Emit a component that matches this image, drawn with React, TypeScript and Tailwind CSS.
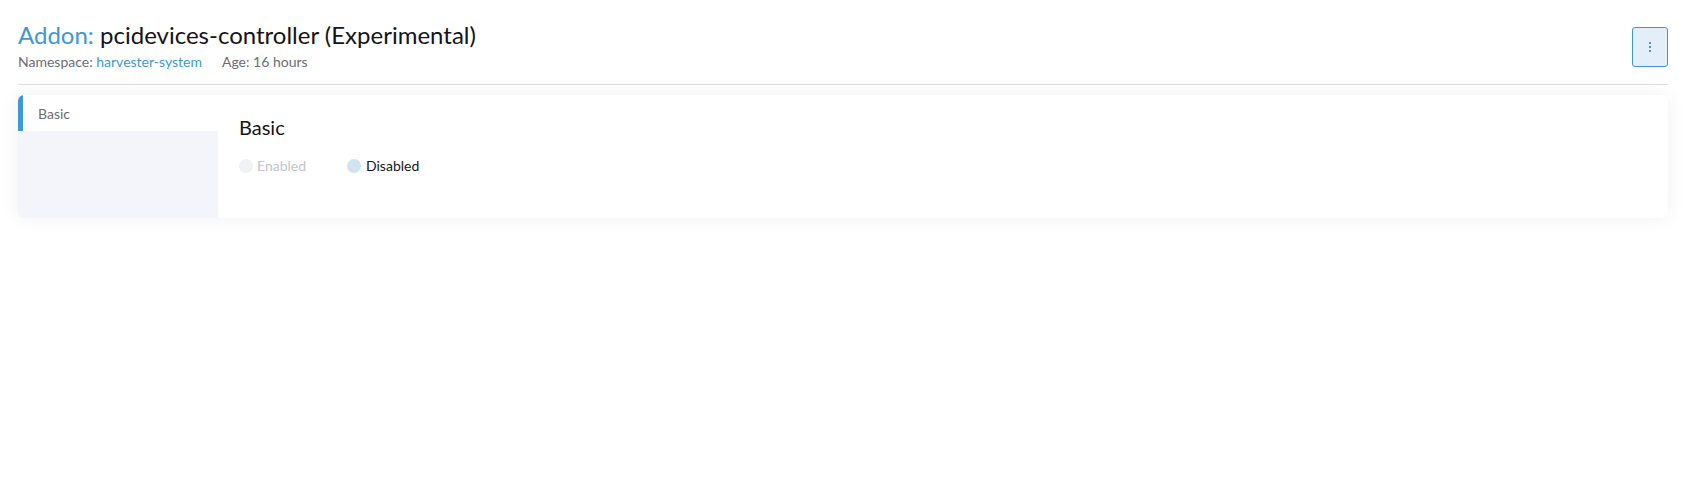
export default function App() {
  return (
    <div className="min-h-[492px] bg-white pl-[18px] pr-[20px] pt-[20px] font-['Lato',sans-serif]">
      <header className="flex items-start justify-between border-b border-[#dcdee7] pb-[12px]">
        <div>
          <h1 className="text-[24px] leading-[30px] text-[#141419]">
            <span className="text-[#3d98d3]">Addon:</span> pcidevices-controller (Experimental)
          </h1>
          <div className="mt-[2px] flex gap-[20px] text-[14px] leading-[20px] text-[#6c6c76]">
            <span>
              Namespace: <span className="text-[#3d98d3]">harvester-system</span>
            </span>
            <span>Age: 16 hours</span>
          </div>
        </div>
        <button className="mt-[7px] flex h-[40px] w-[36px] flex-col items-center justify-center gap-[2px] rounded-[3px] border border-[#3d98d3] bg-[#e3eef8]">
          <span className="h-[2px] w-[2px] bg-[#3d98d3]" />
          <span className="h-[2px] w-[2px] bg-[#3d98d3]" />
          <span className="h-[2px] w-[2px] bg-[#3d98d3]" />
        </button>
      </header>

      <div className="mt-[10px] flex h-[123px] overflow-hidden rounded-[6px] bg-white shadow-[0_0_20px_rgba(0,0,0,0.06)]">
        <div className="flex w-[200px] flex-col bg-[#f4f5fa]">
          <div className="flex h-[36px] items-center border-l-[5px] border-[#3d98d3] bg-white pl-[15px] text-[14px] text-[#6c6c76]">
            Basic
          </div>
        </div>
        <div className="flex-1 pl-[21px] pt-[19px]">
          <h2 className="text-[20px] leading-[26px] text-[#141419]">Basic</h2>
          <div className="mt-[15px] flex items-center text-[14px]">
            <label className="flex w-[108px] items-center gap-[4px] text-[#c4c4cc]">
              <span className="h-[14px] w-[14px] rounded-full bg-[#f1f2f5]" />
              Enabled
            </label>
            <label className="flex items-center gap-[5px] text-[#141419]">
              <span className="h-[14px] w-[14px] rounded-full bg-[#cfe3f3]" />
              Disabled
            </label>
          </div>
        </div>
      </div>
    </div>
  );
}
